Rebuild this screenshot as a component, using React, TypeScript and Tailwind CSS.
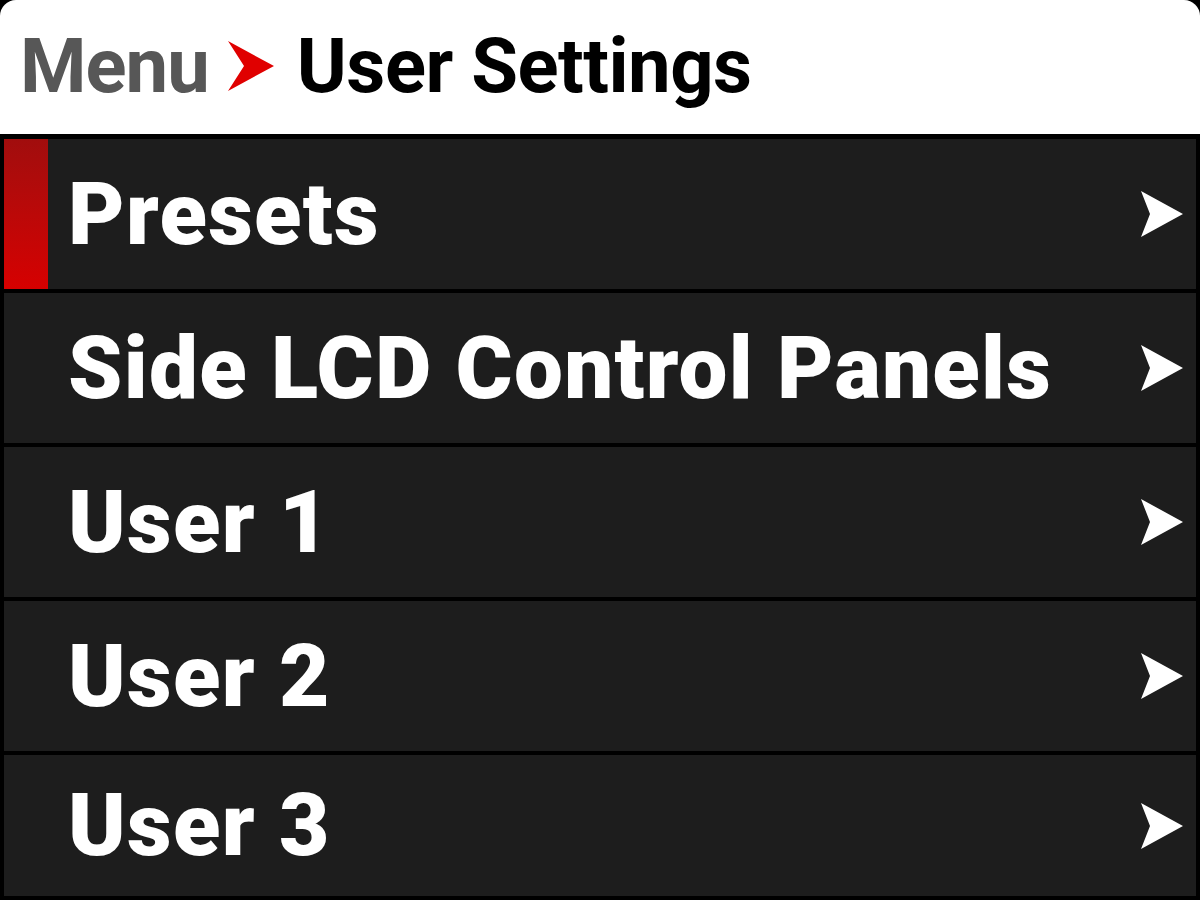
import React from "react";

const items = ["Presets", "Side LCD Control Panels", "User 1", "User 2", "User 3"];

const Chevron = ({ className = "" }: { className?: string }) => (
  <svg width="44" height="48" viewBox="0 0 44 48" className={className}>
    <polygon points="1,1 43,24 1,47 10,24" fill="currentColor" />
  </svg>
);

export default function App() {
  return (
    <div
      className="w-[1200px] h-[900px] bg-black flex flex-col overflow-hidden"
      style={{ fontFamily: "Roboto, 'Noto Sans', sans-serif" }}
    >
      <div className="h-[134px] shrink-0 bg-white rounded-t-[16px] flex items-center pl-[20px] pb-[2px]">
        <span className="text-[76px] font-bold text-[#575757] leading-none tracking-[-1px]">
          Menu
        </span>
        <svg width="48" height="52" viewBox="0 0 48 52" className="ml-[18px] mr-[22px] text-[#e00000]">
          <polygon points="1,1 47,26 1,51 17,26" fill="currentColor" />
        </svg>
        <span className="text-[76px] font-bold text-black leading-none tracking-[-0.5px]">
          User Settings
        </span>
      </div>
      <div className="flex-1 flex flex-col gap-[4px] px-[4px] pt-[5px] pb-[4px] min-h-0">
        {items.map((label, i) => (
          <div
            key={label}
            className={`${i === items.length - 1 ? "flex-1" : "h-[150px]"} shrink-0 bg-[#1d1d1d] flex items-center relative`}
          >
            {i === 0 && (
              <div className="absolute left-0 top-0 bottom-0 w-[44px] bg-gradient-to-b from-[#a10d0d] to-[#d60000]" />
            )}
            <span className="ml-[64px] text-[87px] font-black text-white leading-none tracking-[1.3px]">
              {label}
            </span>
            <Chevron className="ml-auto mr-[12px] text-white" />
          </div>
        ))}
      </div>
    </div>
  );
}
